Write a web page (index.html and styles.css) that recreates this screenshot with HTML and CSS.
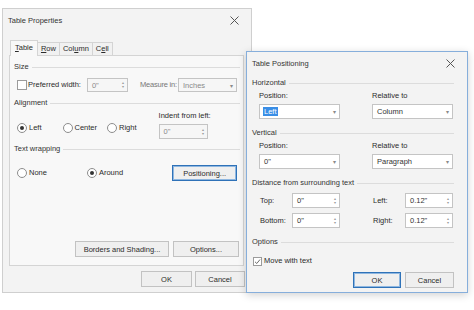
FILE: index.html
```html
<!DOCTYPE html>
<html lang="en">
  <head>
    <meta charset="UTF-8" />
    <meta name="viewport" content="width=device-width, initial-scale=1.0" />
    <title>Table Properties</title>
    <link rel="stylesheet" href="styles.css">
  </head>
  <body>
    <!-- Table Properties window -->
    <div class="dlg props">
      <div class="titlebar">
        <span>Table Properties</span>
        <svg class="close" width="9" height="9" viewBox="0 0 9 9"><path d="M0.5 0.5 L8.5 8.5 M8.5 0.5 L0.5 8.5" /></svg>
      </div>

      <div class="tabs">
        <div class="tab active"><u>T</u>able</div>
        <div class="tab"><u>R</u>ow</div>
        <div class="tab">Col<u>u</u>mn</div>
        <div class="tab">C<u>e</u>ll</div>
      </div>

      <div class="panel">
        <div class="group">Size</div>
        <div class="size-row">
          <span class="check"></span>
          <span class="lbl">Preferred width:</span>
          <div class="field spin w-pref"><span>0"</span><span class="arrows">&#9652;<br>&#9662;</span></div>
          <span class="lbl measure">Measure in:</span>
          <div class="field select w-inches"><span>Inches</span><span class="drop">&#9662;</span></div>
        </div>

        <div class="group">Alignment</div>
        <div class="align-row">
          <div class="radios">
            <span class="radio on"></span><span class="lbl">Left</span>
            <span class="radio gap-center"></span><span class="lbl">Center</span>
            <span class="radio gap-right"></span><span class="lbl">Right</span>
          </div>
          <div class="indent">
            <span class="lbl">Indent from left:</span>
            <div class="field spin w-indent"><span>0"</span><span class="arrows">&#9652;<br>&#9662;</span></div>
          </div>
        </div>

        <div class="group">Text wrapping</div>
        <div class="wrap-row">
          <span class="radio"></span><span class="lbl">None</span>
          <span class="radio gap-around on"></span><span class="lbl">Around</span>
          <button class="btn focus w-pos">Positioning...</button>
        </div>

        <div class="panel-btns">
          <button class="btn w-borders">Borders and Shading...</button>
          <button class="btn w-options">Options...</button>
        </div>
      </div>

      <div class="footer">
        <button class="btn w-ok">OK</button>
        <button class="btn w-cancel">Cancel</button>
      </div>
    </div>

    <!-- Table Positioning window, on top -->
    <div class="dlg pos">
      <div class="titlebar">
        <span>Table Positioning</span>
        <svg class="close" width="9" height="9" viewBox="0 0 9 9"><path d="M0.5 0.5 L8.5 8.5 M8.5 0.5 L0.5 8.5" /></svg>
      </div>

      <div class="pos-body">
        <div class="group">Horizontal</div>
        <div class="pair">
          <span class="lbl">Position:</span>
          <span class="lbl">Relative to</span>
          <div class="field select"><span class="picked">Left</span><span class="drop">&#9662;</span></div>
          <div class="field select"><span>Column</span><span class="drop">&#9662;</span></div>
        </div>

        <div class="group sect">Vertical</div>
        <div class="pair">
          <span class="lbl">Position:</span>
          <span class="lbl">Relative to</span>
          <div class="field select"><span>0"</span><span class="drop">&#9662;</span></div>
          <div class="field select"><span>Paragraph</span><span class="drop">&#9662;</span></div>
        </div>

        <div class="group sect">Distance from surrounding text</div>
        <div class="dist">
          <span class="lbl">Top:</span>
          <div class="field spin"><span>0"</span><span class="arrows">&#9652;<br>&#9662;</span></div>
          <span class="lbl">Left:</span>
          <div class="field spin"><span>0.12"</span><span class="arrows">&#9652;<br>&#9662;</span></div>
          <span class="lbl">Bottom:</span>
          <div class="field spin"><span>0"</span><span class="arrows">&#9652;<br>&#9662;</span></div>
          <span class="lbl">Right:</span>
          <div class="field spin"><span>0.12"</span><span class="arrows">&#9652;<br>&#9662;</span></div>
        </div>

        <div class="group sect">Options</div>
        <div class="move-row">
          <span class="check ticked">
            <svg width="7" height="7" viewBox="0 0 7 7"><path d="M1 3.8 L2.8 5.5 L6 1.5" /></svg>
          </span>
          <span class="lbl">Move with text</span>
        </div>

        <div class="pos-btns">
          <button class="btn focus w-ok2">OK</button>
          <button class="btn w-cancel2">Cancel</button>
        </div>
      </div>
    </div>
  </body>
</html>
```

FILE: styles.css
```css
body {
  margin: 0;
  background: #fff;
  font-family: "Liberation Sans", Arial, sans-serif;
  font-size: 7.5px;
  color: #2b2b2b;
  width: 474px;
  height: 310px;
  position: relative;
  overflow: hidden;
}
u {
  text-decoration-thickness: 1px;
  text-underline-offset: 1px;
}

/* --- windows --- */
.dlg {
  position: absolute;
  box-sizing: border-box;
  background: #f3f3f3;
  display: flex;
  flex-direction: column;
}
.props {
  left: 2px;
  top: 8px;
  width: 250px;
  height: 285px;
  border: 1px solid #cfcfcf;
}
.pos {
  left: 246px;
  top: 51px;
  width: 222px;
  height: 242px;
  border: 1px solid #86aedb;
  box-shadow: 0 2px 8px rgba(0, 0, 0, 0.18);
}
.titlebar {
  height: 23px;
  display: flex;
  align-items: center;
  justify-content: space-between;
  padding: 0 12px 0 5px;
  color: #333;
}
.close path {
  stroke: #555;
  stroke-width: 1;
  fill: none;
}

/* --- tabs --- */
.tabs {
  display: flex;
  align-items: flex-end;
  margin: 8px 0 0 7px;
  height: 15px;
}
.tab {
  height: 13px;
  line-height: 12px;
  padding: 0 3px;
  border: 1px solid #d4d4d4;
  border-bottom: none;
  box-sizing: border-box;
  margin-left: -1px;
  background: #f1f1f1;
}
.tab.active {
  height: 16px;
  line-height: 14px;
  padding: 0 4px;
  background: #f8f8f8;
  position: relative;
  z-index: 1;
  margin-bottom: -1px;
  margin-left: 0;
}

.panel {
  margin: 0 7px 0 6px;
  height: 211px;
  box-sizing: border-box;
  border: 1px solid #d4d4d4;
  background: #f8f8f8;
  padding: 0 3px 8px 4px;
  display: flex;
  flex-direction: column;
}

/* group label with rule running to the right */
.group {
  display: flex;
  align-items: center;
  height: 10px;
  line-height: 10px;
  margin-top: 6px;
  color: #333;
}
.group::after {
  content: "";
  flex: 1;
  height: 1px;
  background: #dcdcdc;
  margin-left: 3px;
}

.lbl {
  white-space: nowrap;
  line-height: 10px;
}

/* --- fields --- */
.field {
  box-sizing: border-box;
  height: 14px;
  flex-shrink: 0;
  border: 1px solid #c4c4c4;
  background: #fff;
  display: flex;
  align-items: center;
  justify-content: space-between;
  padding: 0 3px 0 4px;
  color: #333;
}
.props .field {
  background: #f6f6f6;
  color: #8a8a8a;
}
.arrows {
  font-size: 4px;
  line-height: 4px;
  color: #9a9a9a;
  text-align: center;
}
.drop {
  font-size: 6px;
  color: #8a8a8a;
}
.picked {
  background: #3a8ee6;
  color: #fff;
  padding: 0 1px;
  margin-left: -1px;
}

.check {
  box-sizing: border-box;
  width: 10px;
  height: 10px;
  flex-shrink: 0;
  border: 1px solid #9b9b9b;
  background: #fff;
  display: inline-flex;
  align-items: center;
  justify-content: center;
}
.check path {
  stroke: #6b6b6b;
  stroke-width: 1;
  fill: none;
}
.radio {
  box-sizing: border-box;
  width: 10px;
  height: 10px;
  flex-shrink: 0;
  border: 1px solid #8d8d8d;
  border-radius: 50%;
  background: #fff;
  display: inline-flex;
  align-items: center;
  justify-content: center;
  margin-right: 2px;
}
.radio.on::after {
  content: "";
  width: 4px;
  height: 4px;
  border-radius: 50%;
  background: #333;
}

.btn {
  box-sizing: border-box;
  height: 16px;
  flex-shrink: 0;
  padding: 0;
  font-family: inherit;
  font-size: 7.5px;
  color: #2b2b2b;
  background: #efefef;
  border: 1px solid #c2c2c2;
  border-radius: 0;
}
.btn.focus {
  border: 1px solid #2f72b8;
  box-shadow: inset 0 0 0 1px #8fb7e0;
}

/* --- Table Properties content --- */
.size-row {
  display: flex;
  align-items: center;
  margin: 6px 0 0 3px;
  height: 14px;
}
.size-row .check {
  margin-right: 1px;
}
.w-pref {
  width: 41px;
  margin-left: 6px;
}
.measure {
  margin-left: 12px;
  margin-right: 1px;
  letter-spacing: -0.2px;
  color: #777;
}
.w-inches {
  width: 59px;
}

.align-row {
  display: flex;
  margin: 2px 0 0 3px;
  height: 29px;
}
.radios {
  display: flex;
  align-items: center;
  height: 10px;
  margin-top: 13px;
}
.gap-center {
  margin-left: 21px;
}
.gap-right {
  margin-left: 10px;
}
.indent {
  margin-left: 22px;
  display: flex;
  flex-direction: column;
  gap: 3px;
  padding-top: 1px;
}
.w-indent {
  width: 49px;
  height: 15px;
}
.align-row + .group {
  margin-top: 5px;
}

.wrap-row {
  display: flex;
  align-items: center;
  margin: 11px 0 0 3px;
  height: 16px;
}
.gap-around {
  margin-left: 40px;
}
.w-pos {
  width: 65px;
  margin-left: 49px;
}

.panel-btns {
  margin-top: auto;
  display: flex;
  justify-content: flex-end;
  gap: 4px;
  padding-right: 1px;
}
.w-borders {
  width: 94px;
}
.w-options {
  width: 66px;
}

.footer {
  display: flex;
  justify-content: flex-end;
  gap: 3px;
  margin-top: 5px;
  padding-right: 6px;
}
.w-ok {
  width: 51px;
}
.w-cancel {
  width: 50px;
}

/* --- Table Positioning content --- */
.pos-body {
  padding: 0 13px 0 5px;
  display: flex;
  flex-direction: column;
}
.pos-body > .group:first-child {
  margin-top: 3px;
}
.pos-body .group.sect {
  margin-top: 9px;
}
.pair {
  display: grid;
  grid-template-columns: 81px 81px;
  column-gap: 32px;
  row-gap: 3px;
  margin: 3px 0 0 7px;
}
.pair .field {
  height: 15px;
}
.dist {
  display: grid;
  grid-template-columns: 32px 81px 32px 48px;
  row-gap: 5px;
  align-items: center;
  margin: 5px 0 0 8px;
}
.dist .field {
  width: 48px;
  height: 15px;
}
.move-row {
  display: flex;
  align-items: center;
  gap: 2px;
  margin: 9px 0 0 1px;
  height: 10px;
}
.move-row .check {
  width: 9px;
  height: 9px;
}
.pos-btns {
  display: flex;
  justify-content: flex-end;
  gap: 4px;
  margin-top: 6px;
}
.w-ok2 {
  width: 48px;
}
.w-cancel2 {
  width: 49px;
}
```
